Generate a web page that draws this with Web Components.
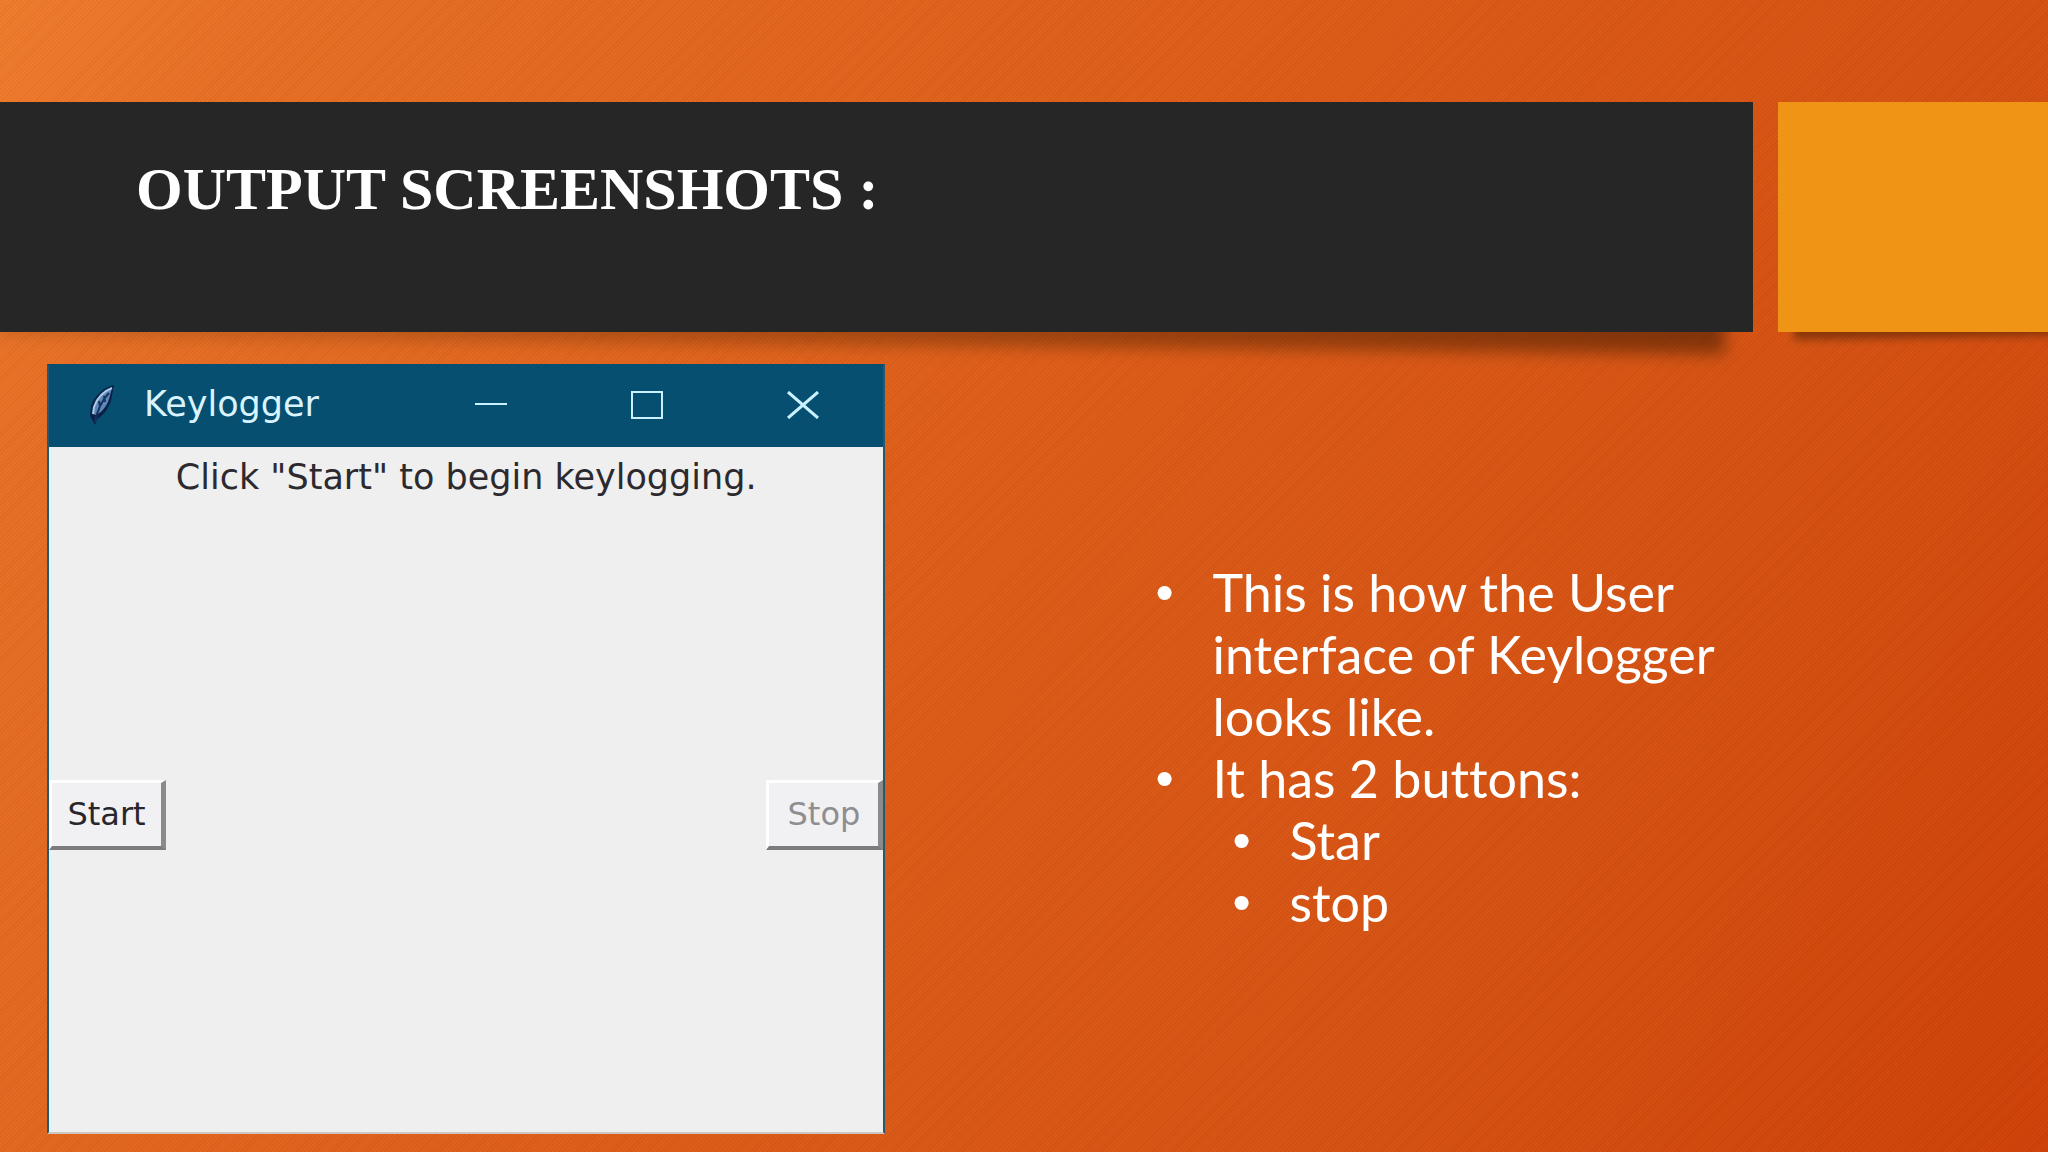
<!DOCTYPE html>
<html lang="en">
<head>
<meta charset="utf-8">
<title>Output Screenshots</title>
<style>
  html, body { margin: 0; min-height: 100%; }
  body { font-family: "Open Sans", "Noto Sans", sans-serif; }
</style>
</head>
<body>
<slide-page>
  <slide-banner slot="banner">OUTPUT SCREENSHOTS :</slide-banner>
  <app-window caption="Keylogger">
    <span slot="message">Click "Start" to begin keylogging.</span>
    <tk-button slot="left">Start</tk-button>
    <tk-button slot="right" disabled>Stop</tk-button>
  </app-window>
  <bullet-list>
    <bullet-item>This is how the User interface of Keylogger looks like.</bullet-item>
    <bullet-item>It has 2 buttons:
      <bullet-list slot="nested" nested>
        <bullet-item>Star</bullet-item>
        <bullet-item>stop</bullet-item>
      </bullet-list>
    </bullet-item>
  </bullet-list>
</slide-page>

<script>
const define = (name, html, setup) => {
  const template = document.createElement('template');
  template.innerHTML = html;
  customElements.define(name, class extends HTMLElement {
    constructor() {
      super();
      this.attachShadow({ mode: 'open' }).append(template.content.cloneNode(true));
    }
    connectedCallback() { if (setup) setup(this, this.shadowRoot); }
  });
};

define('slide-page', `
  <style>
    :host {
      display: flex; flex-direction: column; box-sizing: border-box;
      min-height: 100vh; padding: 102px 0 18px; gap: 32px; overflow: hidden;
      background:
        repeating-linear-gradient(135deg, rgba(150,40,0,.07) 0 1px, rgba(255,150,70,.05) 1px 3px),
        linear-gradient(120deg, #ee7c2d 0%, #e66f25 10%, #e1671f 25%, #da5a17 50%, #d35012 75%, #cc3f08 100%);
    }
    main { flex: 1; display: flex; align-items: stretch; padding-left: 47px; gap: 270px; }
    ::slotted(app-window) { flex: 0 0 calc(42% - 2px); }
    ::slotted(bullet-list) { align-self: center; }
  </style>
  <slot name="banner"></slot>
  <main><slot></slot></main>`);

define('slide-banner', `
  <style>
    :host { display: flex; gap: 25px; height: 230px; position: relative; z-index: 0; }
    .bar, .tile { position: relative; }
    .bar { flex: 1; }
    .tile { flex: 0 0 270px; }
    .face { position: relative; height: 100%; box-sizing: border-box; }
    .bar .face { background: #262626; padding: 47px 0 0 136px; }
    .tile .face { background: #f09415; }
    .bar::before, .tile::before { content: ""; position: absolute; }
    .bar::before {
      inset: 50% 28px -22px 0; filter: blur(8px);
      background: linear-gradient(to right, rgba(60,25,0,.15), rgba(60,25,0,.55));
      transform-origin: right bottom; transform: skewY(.6deg);
    }
    .tile::before {
      inset: 50% -20px -8px 16px; filter: blur(4px); background: rgba(60,25,0,.5);
      transform-origin: left bottom; transform: skewY(-1deg);
    }
    h1 { margin: 0; color: #fff; font: bold 60px/80px "Liberation Serif", serif; }
  </style>
  <div class="bar"><div class="face"><h1><slot></slot></h1></div></div>
  <div class="tile"><div class="face"></div></div>`);

define('app-window', `
  <style>
    :host {
      display: flex; flex-direction: column; box-sizing: border-box;
      border: 2px solid #27586f; border-top-color: #064f70; border-bottom-color: #cfc6c0; background: #efefef;
      font-family: "DejaVu Sans", sans-serif;
    }
    header {
      display: flex; align-items: center; box-sizing: border-box; height: 81px;
      padding: 0 2px 4px 0; background: #064f70; color: #d9f4ff;
    }
    .feather { width: 30px; height: 42px; margin: 0 27px 0 38px; }
    h2 { flex: 1; margin: 0; font-size: 35px; line-height: 41px; font-weight: 400; }
    header button {
      width: 156px; height: 77px; border: 0; padding: 0; background: none; color: #c9f1ff;
      display: grid; place-items: center;
    }
    .body { flex: 1; display: flex; flex-direction: column; box-shadow: inset 6px 0 3px -3px #dff5fe; }
    p { margin: 0; padding-top: 10px; text-align: center; font-size: 35px; line-height: 41px; color: #2c2a2e; }
    .row { flex: 1; display: flex; justify-content: space-between; align-items: center; }
  </style>
  <header>
    <svg class="feather" viewBox="0 0 30 42" aria-hidden="true">
      <path d="M27 1C17 3 8 11 4 22l-1 10 5 9 2-6c6-3 11-10 14-18z" fill="#0a2148"/>
      <path d="M25 4C17 7 10 14 7 23l-1 7 3 1c6-3 11-9 13-16z" fill="#5d88b8"/>
      <path d="M25 4C17 7 10 14 7 23l-1 7" fill="none" stroke="#a9cbe6" stroke-width="2"/>
      <path d="M22 9C16 15 11 23 8 38M12 17l1 6M17 12l1 6" fill="none" stroke="#17325f" stroke-width="2"/>
    </svg>
    <h2></h2>
    <button aria-label="Minimize"><svg width="32" height="28"><path d="M0 13h32" stroke="currentColor" stroke-width="2"/></svg></button>
    <button aria-label="Maximize"><svg width="32" height="28"><path d="M1 1h30v26H1z" fill="none" stroke="currentColor" stroke-width="2"/></svg></button>
    <button aria-label="Close"><svg width="32" height="28"><path d="M1 1l30 26M31 1L1 27" stroke="currentColor" stroke-width="3"/></svg></button>
  </header>
  <div class="body">
    <p><slot name="message"></slot></p>
    <div class="row"><slot name="left"></slot><slot name="right"></slot></div>
  </div>`, (host, root) => { root.querySelector('h2').textContent = host.getAttribute('caption'); });

define('tk-button', `
  <style>
    :host { display: block; }
    button {
      display: block; box-sizing: border-box; width: 117px; height: 70px; padding: 0;
      border-style: solid; border-width: 3px 5px 4px 3px;
      border-color: #fff #8b8b8b #7c7c7c #fff; background: #f1f1f3; color: #28262a;
      font: 32px/41px "DejaVu Sans", sans-serif;
    }
    button:disabled { color: #8e8e90; }
  </style>
  <button type="button"><slot></slot></button>`,
  (host, root) => { root.querySelector('button').disabled = host.hasAttribute('disabled'); });

define('bullet-list', `
  <style>
    :host {
      display: block; color: #fff; width: 580px; font: 52px/62px Lato, sans-serif;
      font-variant-ligatures: none; padding-bottom: 4px;
    }
    :host([nested]) { width: auto; margin-left: 77px; padding: 0; }
  </style>
  <div role="list"><slot></slot></div>`);

define('bullet-item', `
  <style>
    :host { display: block; }
    .item { display: flex; }
    .item::before { content: "•"; flex: 0 0 57px; font-family: "Liberation Sans", sans-serif; }
  </style>
  <div class="item" role="listitem"><div><slot></slot></div></div>
  <slot name="nested"></slot>`);
</script>
</body>
</html>
